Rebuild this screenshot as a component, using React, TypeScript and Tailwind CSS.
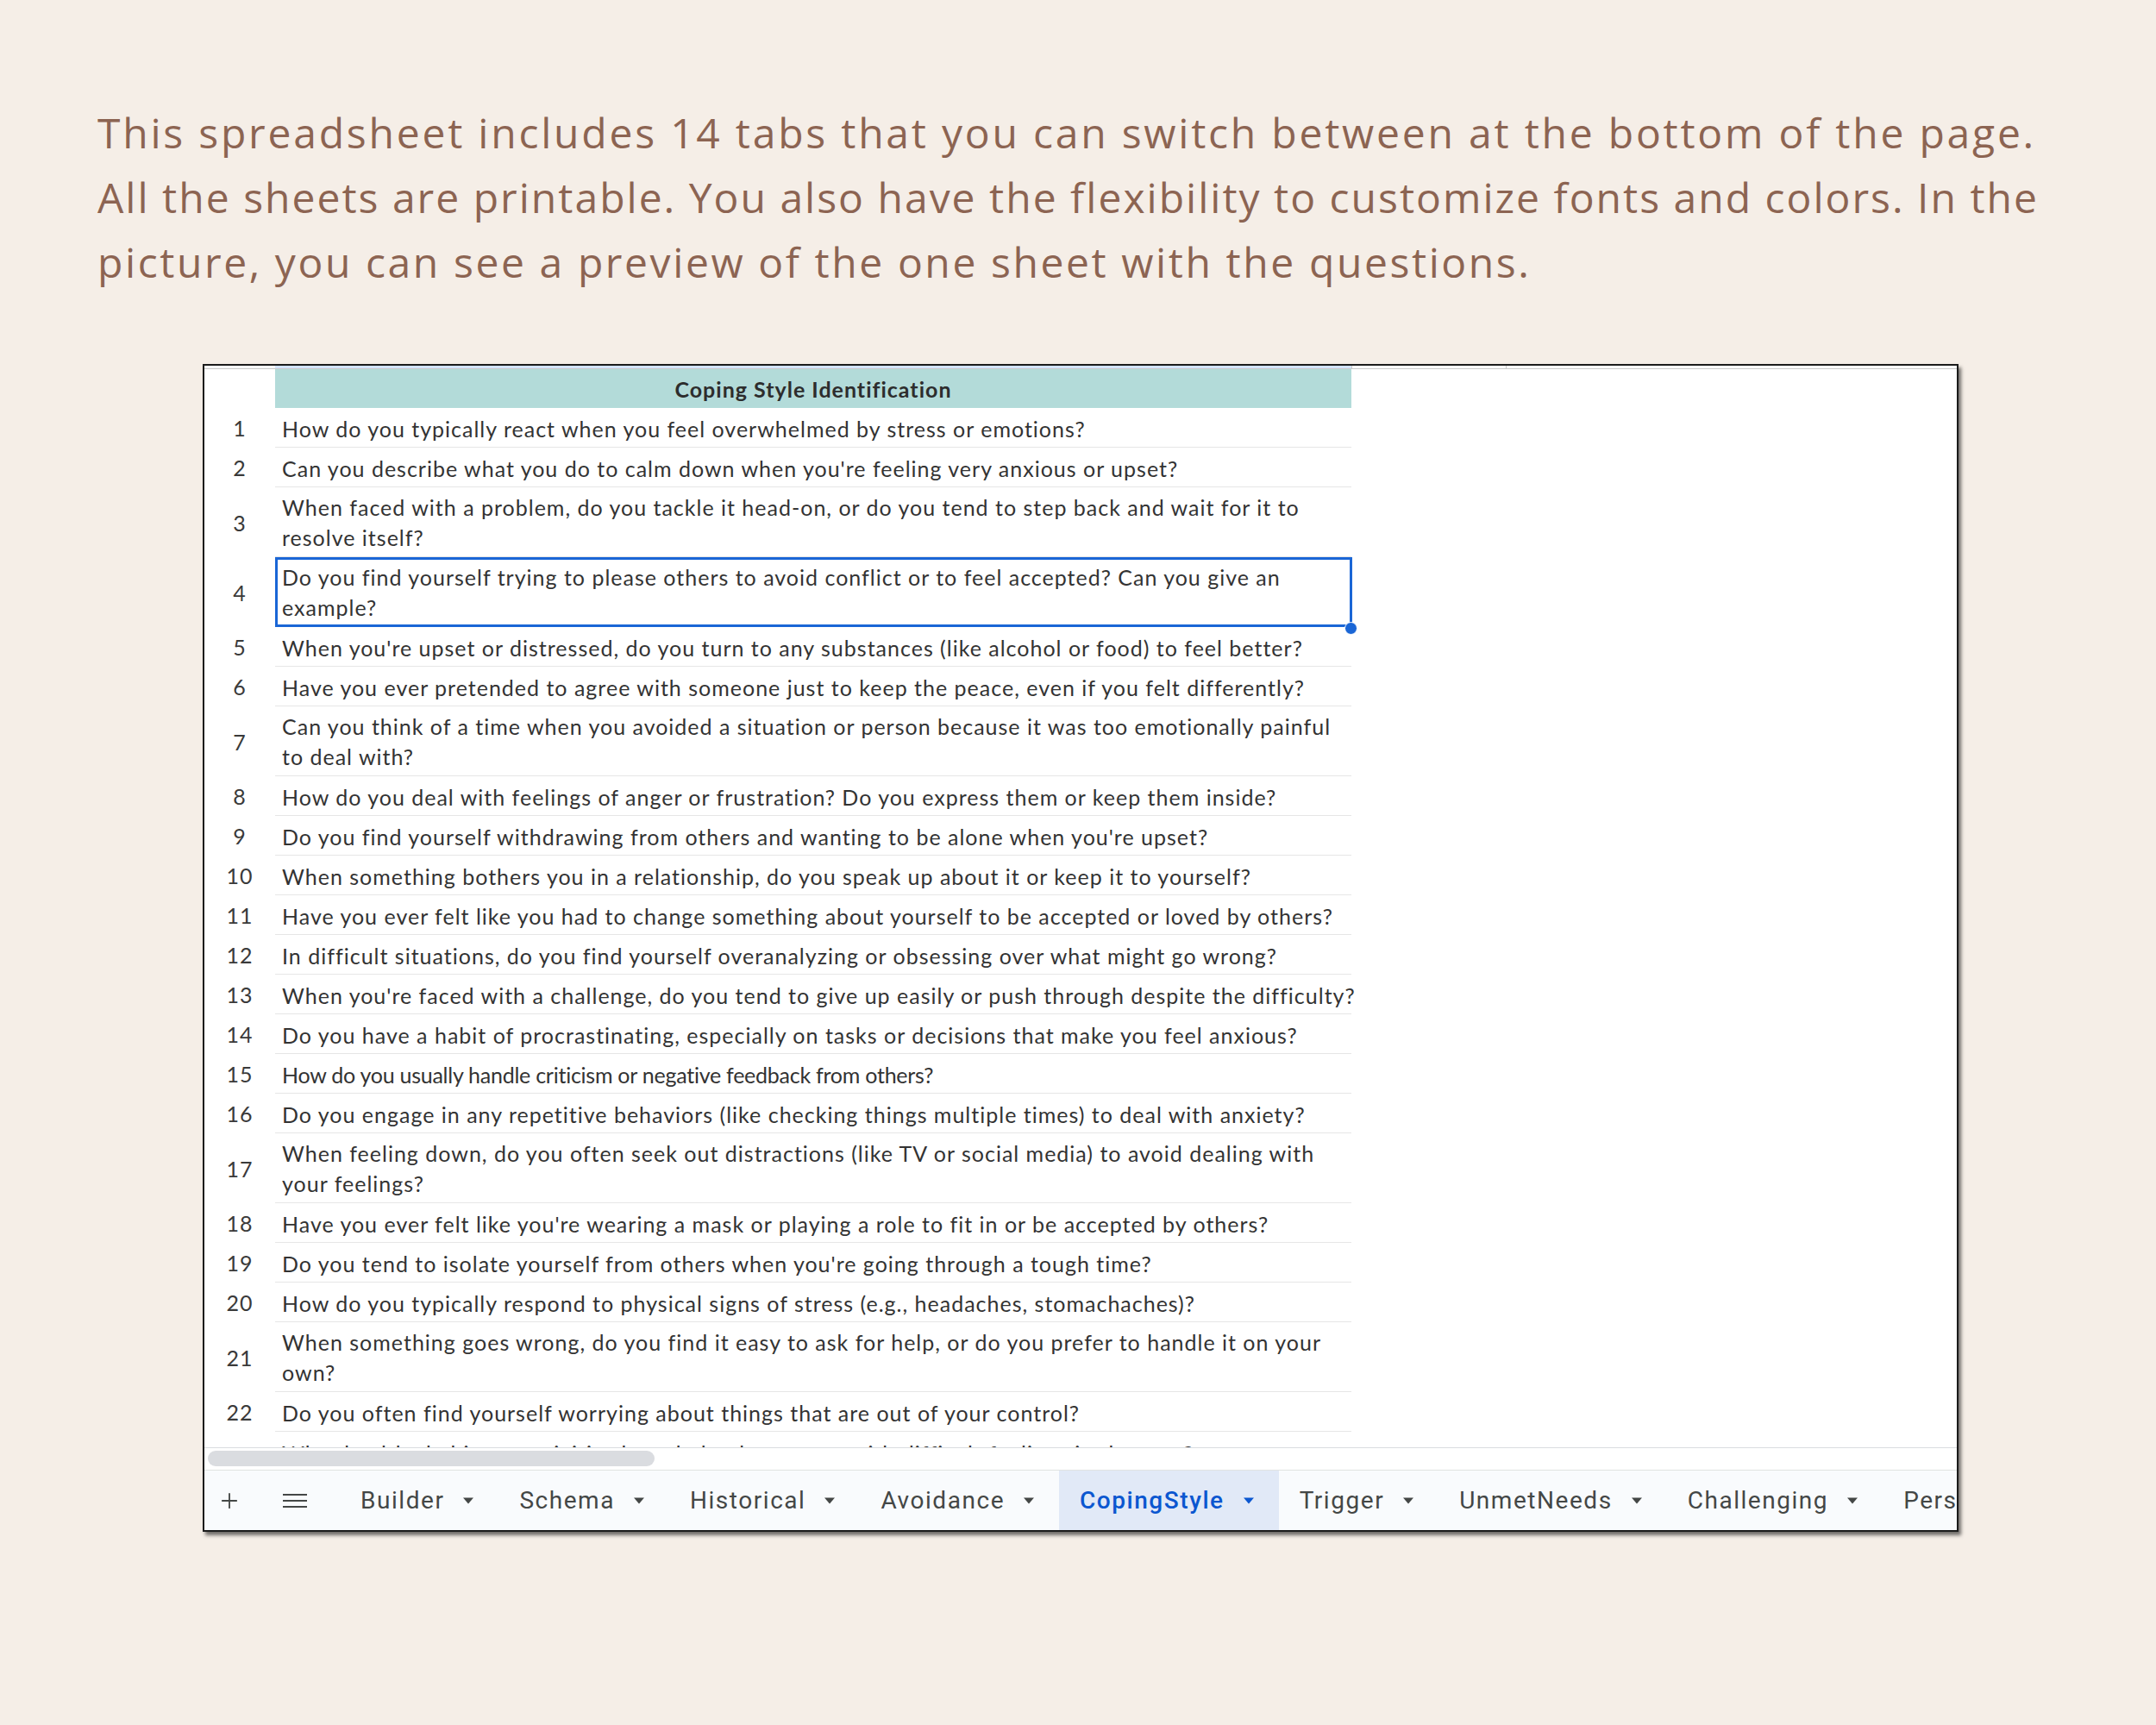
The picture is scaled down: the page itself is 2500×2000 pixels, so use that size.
import { Plus } from "lucide-react";

type Row = { n: number; lines: string[]; tight?: boolean };

const rows: Row[] = [
  { n: 1, lines: ["How do you typically react when you feel overwhelmed by stress or emotions?"] },
  { n: 2, lines: ["Can you describe what you do to calm down when you're feeling very anxious or upset?"] },
  { n: 3, lines: ["When faced with a problem, do you tackle it head-on, or do you tend to step back and wait for it to", "resolve itself?"] },
  { n: 4, lines: ["Do you find yourself trying to please others to avoid conflict or to feel accepted? Can you give an", "example?"] },
  { n: 5, lines: ["When you're upset or distressed, do you turn to any substances (like alcohol or food) to feel better?"] },
  { n: 6, lines: ["Have you ever pretended to agree with someone just to keep the peace, even if you felt differently?"] },
  { n: 7, lines: ["Can you think of a time when you avoided a situation or person because it was too emotionally painful", "to deal with?"] },
  { n: 8, lines: ["How do you deal with feelings of anger or frustration? Do you express them or keep them inside?"] },
  { n: 9, lines: ["Do you find yourself withdrawing from others and wanting to be alone when you're upset?"] },
  { n: 10, lines: ["When something bothers you in a relationship, do you speak up about it or keep it to yourself?"] },
  { n: 11, lines: ["Have you ever felt like you had to change something about yourself to be accepted or loved by others?"] },
  { n: 12, lines: ["In difficult situations, do you find yourself overanalyzing or obsessing over what might go wrong?"] },
  { n: 13, lines: ["When you're faced with a challenge, do you tend to give up easily or push through despite the difficulty?"] },
  { n: 14, lines: ["Do you have a habit of procrastinating, especially on tasks or decisions that make you feel anxious?"] },
  { n: 15, lines: ["How do you usually handle criticism or negative feedback from others?"], tight: true },
  { n: 16, lines: ["Do you engage in any repetitive behaviors (like checking things multiple times) to deal with anxiety?"] },
  { n: 17, lines: ["When feeling down, do you often seek out distractions (like TV or social media) to avoid dealing with", "your feelings?"] },
  { n: 18, lines: ["Have you ever felt like you're wearing a mask or playing a role to fit in or be accepted by others?"] },
  { n: 19, lines: ["Do you tend to isolate yourself from others when you're going through a tough time?"] },
  { n: 20, lines: ["How do you typically respond to physical signs of stress (e.g., headaches, stomachaches)?"] },
  { n: 21, lines: ["When something goes wrong, do you find it easy to ask for help, or do you prefer to handle it on your", "own?"] },
  { n: 22, lines: ["Do you often find yourself worrying about things that are out of your control?"] },
];

const tabs = ["Builder", "Schema", "Historical", "Avoidance", "CopingStyle", "Trigger", "UnmetNeeds", "Challenging", "Perspective"];

function Caret({ active }: { active?: boolean }) {
  return (
    <svg width="12" height="8" viewBox="0 0 12 8" className="shrink-0">
      <path d="M0 0.5h12L6 7.5z" fill={active ? "#0b57d0" : "#444746"} />
    </svg>
  );
}

function SheetRow({ row, hideNumber }: { row: Row; hideNumber?: boolean }) {
  const double = row.lines.length > 1;
  return (
    <div className={`flex ${double ? "h-[81px]" : "h-[46px]"}`}>
      <div className="w-[82px] shrink-0 flex items-center justify-center pt-[2px] text-[#3a3a3a]">
        {hideNumber ? "" : row.n}
      </div>
      <div
        className={`w-[1248px] shrink-0 border-b border-[#e6e6e6] pl-[8px] flex flex-col justify-center ${
          double ? "pt-[2px]" : "pt-[3px]"
        } ${row.tight ? "tracking-[-0.01em]" : ""}`}
      >
        {row.lines.map((l) => (
          <div key={l} className="whitespace-nowrap leading-[35px]">
            {l}
          </div>
        ))}
      </div>
    </div>
  );
}

export default function App() {
  return (
    <div className="w-[2500px] h-[2000px] bg-[#f5eee7] overflow-hidden">
      <p className="pl-[113px] pt-[116px] text-[48px] leading-[75px] font-normal text-[#8c6452] [font-family:'Open_Sans',sans-serif] whitespace-nowrap">
        <span className="tracking-[0.058em]">This spreadsheet includes 14 tabs that you can switch between at the bottom of the page.</span>
        <br />
        <span className="tracking-[0.042em]">All the sheets are printable. You also have the flexibility to customize fonts and colors. In the</span>
        <br />
        <span className="tracking-[0.054em]">picture, you can see a preview of the one sheet with the questions.</span>
      </p>

      <div className="ml-[235px] mt-[81px] w-[2036px] h-[1354px] border-2 border-[#1b1b1b] bg-white shadow-[3px_4px_4px_rgba(0,0,0,0.55)] flex flex-col overflow-hidden">
        {/* column header strip */}
        <div className="flex h-[4px] shrink-0 border-b border-[#c8c8c8]">
          <div className="w-[82px] bg-[#f8f9fa]" />
          <div className="w-[1248px] bg-[#d3e3fd]" />
          <div className="w-[179px] border-l border-[#c8c8c8]" />
          <div className="flex-1 border-l border-[#c8c8c8]" />
        </div>

        <div className="relative shrink-0 text-[25px] tracking-[0.04em] text-[#333333] [font-family:Lato,sans-serif]">
          <div className="flex h-[45px]">
            <div className="w-[82px] shrink-0" />
            <div className="w-[1248px] shrink-0 bg-[#b3dbd9] flex items-center justify-center pt-[2px] font-bold text-[#2d2d2d]">
              Coping Style Identification
            </div>
          </div>
          {rows.map((r) => (
            <SheetRow key={r.n} row={r} />
          ))}
          {/* next row, mostly hidden under the scrollbar */}
          <div className="h-[18px] overflow-hidden">
            <div className="pt-[1px]">
              <SheetRow
                hideNumber
                row={{ n: 23, lines: ["What healthy habits or activities have helped you cope with difficult feelings in the past?"] }}
              />
            </div>
          </div>

          {/* active cell */}
          <div className="absolute left-[82px] top-[218px] w-[1249px] h-[81px] border-[3px] border-[#1a66d6]" />
          <div className="absolute left-[1322px] top-[293px] w-[15px] h-[15px] rounded-full bg-[#1a66d6] border border-white" />
        </div>

        {/* horizontal scrollbar */}
        <div className="h-[26px] shrink-0 border-t border-[#dadce0] pl-[4px] pt-[3px]">
          <div className="w-[518px] h-[18px] rounded-full bg-[#dadce0]" />
        </div>

        {/* sheet tabs */}
        <div className="flex-1 flex items-center border-t border-[#e1e3e1] bg-[#f9fbfd] text-[28px] text-[#444746] tracking-[0.055em] [font-family:Roboto,sans-serif] whitespace-nowrap">
          <div className="w-[28px] ml-[15px] flex justify-center shrink-0">
            <Plus size={36} strokeWidth={1.6} color="#444746" />
          </div>
          <div className="ml-[48px] w-[28px] shrink-0 flex flex-col gap-[5px]">
            <div className="h-[2px] bg-[#444746]" />
            <div className="h-[2px] bg-[#444746]" />
            <div className="h-[2px] bg-[#444746]" />
          </div>
          <div className="ml-[38px] flex h-full">
            {tabs.map((t) => {
              const active = t === "CopingStyle";
              return (
                <div
                  key={t}
                  className={`flex items-center gap-[22px] pl-[24px] pr-[29px] h-full shrink-0 ${
                    active ? "bg-[#e1e9f7] text-[#0b57d0] font-medium" : ""
                  }`}
                >
                  <span>{t}</span>
                  <Caret active={active} />
                </div>
              );
            })}
          </div>
        </div>
      </div>
    </div>
  );
}
